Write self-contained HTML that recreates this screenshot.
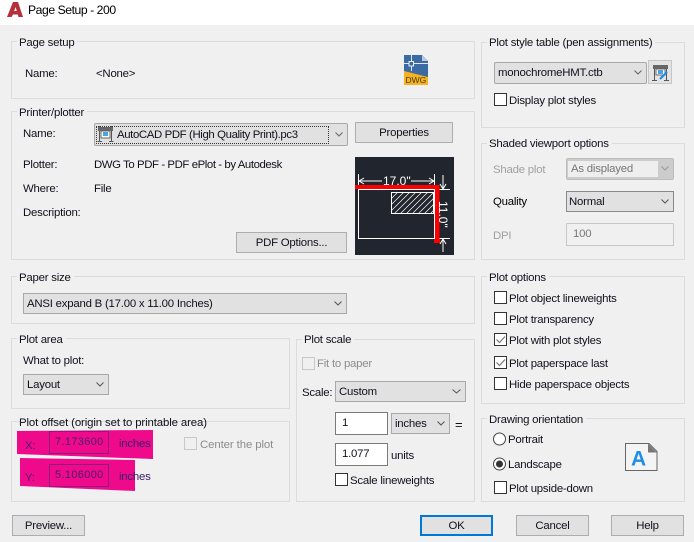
<!DOCTYPE html>
<html><head><meta charset="utf-8"><style>
html,body{margin:0;padding:0}
body{width:694px;height:542px;position:relative;overflow:hidden;background:#f0f0f0;font:11.4px "Liberation Sans",sans-serif;letter-spacing:-.22px;color:#10101c}
#top{position:absolute;left:0;top:0;width:694px;height:25px;background:#fff}
.g{position:absolute;border:1px solid #dcdcdc;box-sizing:border-box}
.l{position:absolute;background:#f0f0f0;padding:0 3px 0 2px;height:14px;line-height:14px;white-space:nowrap;margin-top:1px}
.t{position:absolute;white-space:nowrap;line-height:14px;margin-top:1px}
.d{color:#8c8c8c}
.b{position:absolute;box-sizing:border-box;background:#e1e1e1;border:1px solid #adadad;text-align:center;white-space:nowrap;padding-top:1px}
.s{position:absolute;box-sizing:border-box;background:#e1e1e1;border:1px solid #a8a8a8;white-space:nowrap;padding-left:3px;padding-top:1px}
.s svg{position:absolute;right:4px;top:50%;margin-top:-3px}
.i{position:absolute;box-sizing:border-box;background:#fff;border:1px solid #7a7a7a;padding-left:6px;white-space:nowrap;padding-top:1px}
.c{position:absolute;box-sizing:border-box;width:13px;height:13px;background:#fff;border:1px solid #333}
.c svg{position:absolute;left:0;top:0}
.m{position:absolute;background:#ee0a8b}
svg text{letter-spacing:0}
</style></head><body>
<div id="top"></div>
<svg style="position:absolute;left:7px;top:2px" width="16" height="15" viewBox="0 0 16 15"><path d="M0 15 L6 0 H11 L16 15 H11.500 L10.800 12.500 H6 L4.500 15 Z M7.200 9 H9.800 L8.600 5 Z" fill="#b5303a" fill-rule="evenodd"/></svg>
<div class="t" style="left:28px;top:2px;font-size:12.2px;letter-spacing:-.45px;color:#000">Page Setup - 200</div>

<!-- groups -->
<div class="g" style="left:11px;top:41px;width:464px;height:58px"></div>
<div class="l" style="left:17px;top:35px">Page setup</div>
<div class="t" style="left:25px;top:66px">Name:</div>
<div class="t" style="left:96px;top:66px">&lt;None&gt;</div>
<svg style="position:absolute;left:404px;top:55px" width="24" height="30" viewBox="0 0 24 30"><path d="M0 0H18L24 6V30H0Z" fill="#f6b21f"/><path d="M0 0H18L24 6V22L0 16Z" fill="#3c6aa3"/><path d="M18 0L24 6H18Z" fill="#b9cbe2"/><path d="M0 8.500H24M7.500 0V16" stroke="#dfe8f3" stroke-width="1" fill="none"/><rect x="5" y="6.500" width="4.500" height="4.500" fill="#3c6aa3" stroke="#e6eef7"/><text x="1.500" y="28" font-size="8.500" fill="#4a3c18" font-family="Liberation Sans">DWG</text></svg>

<div class="g" style="left:11px;top:111px;width:464px;height:149px"></div>
<div class="l" style="left:17px;top:105px">Printer/plotter</div>
<div class="t" style="left:23px;top:126px">Name:</div>
<div class="s" style="left:94px;top:123px;width:254px;height:23px;border-radius:2px;padding-left:22px;line-height:21px;letter-spacing:-.38px">AutoCAD PDF (High Quality Print).pc3<svg width="8" height="5"><path d="M0.500 0.500L4 4L7.500 0.500" stroke="#666" fill="none"/></svg></div>
<div style="position:absolute;left:96px;top:126px;width:231px;height:16px;border:1px dotted #333"></div>
<svg style="position:absolute;left:97px;top:125px" width="17" height="18" viewBox="0 0 17 18"><path d="M2.500 1V17M14.500 1V17M0.500 16.500H5M12 16.500H16.500" stroke="#555" fill="none"/><rect x="1" y="2" width="15" height="4" fill="#666"/><rect x="4" y="6" width="9" height="7" fill="#fff" stroke="#666"/><rect x="6" y="7" width="5" height="4" fill="#4aa3df"/></svg>
<div class="b" style="left:355px;top:122px;width:98px;height:21px;line-height:19px">Properties</div>
<div class="t" style="left:23px;top:157px">Plotter:</div>
<div class="t" style="left:94px;top:157px;letter-spacing:-.42px">DWG To PDF - PDF ePlot - by Autodesk</div>
<div class="t" style="left:23px;top:181px">Where:</div>
<div class="t" style="left:94px;top:181px">File</div>
<div class="t" style="left:23px;top:205px">Description:</div>
<div class="b" style="left:236px;top:232px;width:111px;height:21px;line-height:19px">PDF Options...</div>
<svg style="position:absolute;left:355px;top:157px" width="99" height="98" viewBox="0 0 99 98">
<rect width="99" height="98" fill="#21262e"/>
<defs><pattern id="h" width="6" height="6" patternUnits="userSpaceOnUse"><path d="M0 6L6 0M-1 1L1 -1M5 7L7 5" stroke="#fff" stroke-width=".7"/></pattern></defs>
<rect x="3.500" y="32.500" width="76" height="49" fill="none" stroke="#fff"/>
<rect x="36.500" y="35.500" width="42" height="21" fill="url(#h)" stroke="#fff"/>
<path d="M3.500 17V30M79.500 17V30M4 24H27M56 24H79M88 18V32M83 32.500H95M88 82V95M83 81.500H95M4 24L9 21M4 24L9 27M79 24L74 21M79 24L74 27M88 32L85 27M88 32L91 27M88 82L85 87M88 82L91 87" stroke="#fff" fill="none"/>
<rect x="0" y="28" width="84" height="4" fill="#f00"/><rect x="80" y="28" width="4.500" height="55" fill="#f00"/><rect x="79" y="82" width="6" height="4" fill="#f00"/>
<text x="28" y="28" font-size="12" fill="#fff" font-family="Liberation Sans">17.0"</text>
<text transform="translate(84,44) rotate(90)" font-size="12" fill="#fff" font-family="Liberation Sans">11.0"</text>
</svg>

<div class="g" style="left:11px;top:276px;width:464px;height:48px"></div>
<div class="l" style="left:17px;top:270px">Paper size</div>
<div class="s" style="left:23px;top:293px;width:324px;height:21px;line-height:19px">ANSI expand B (17.00 x 11.00 Inches)<svg width="8" height="5"><path d="M0.500 0.500L4 4L7.500 0.500" stroke="#555" fill="none"/></svg></div>

<div class="g" style="left:11px;top:338px;width:279px;height:71px"></div>
<div class="l" style="left:17px;top:332px">Plot area</div>
<div class="t" style="left:23px;top:353px">What to plot:</div>
<div class="s" style="left:23px;top:374px;width:86px;height:21px;line-height:19px">Layout<svg width="8" height="5"><path d="M0.500 0.500L4 4L7.500 0.500" stroke="#555" fill="none"/></svg></div>

<div class="g" style="left:11px;top:421px;width:279px;height:81px"></div>
<div class="m" style="left:17px;top:430px;width:136px;height:29px;clip-path:polygon(0 1px,100% 0,100% 100%,0 24px)"></div>
<div class="m" style="left:20px;top:458px;width:115px;height:33px;clip-path:polygon(0 0,100% 2px,100% 100%,0 28px)"></div>
<div class="l" style="left:17px;top:415px;background:none;padding-left:2px;letter-spacing:-.12px">Plot offset (origin set to printable area)</div>
<div class="t" style="left:25px;top:438px;color:#4a1b6e">X:</div>
<div style="position:absolute;box-sizing:border-box;left:49px;top:431px;width:60px;height:23px;border:1px solid #8e1b7c"></div>
<div class="t" style="left:55px;top:434px;color:#4a1b6e;font-size:10.9px;letter-spacing:.4px">7.173600</div>
<div class="t" style="left:119px;top:436px;color:#3a1a6a">inches</div>
<div class="t" style="left:25px;top:470px;color:#4a1b6e">Y:</div>
<div style="position:absolute;box-sizing:border-box;left:49px;top:464px;width:60px;height:23px;border:1px solid #8e1b7c"></div>
<div class="t" style="left:55px;top:467px;color:#4a1b6e;font-size:10.9px;letter-spacing:.4px">5.106000</div>
<div class="t" style="left:119px;top:469px;color:#3a1a6a">inches</div>
<div class="c" style="left:184px;top:437px;background:#f0f0f0;border-color:#c8c8c8"></div>
<div class="t d" style="left:200px;top:437px;letter-spacing:-.1px">Center the plot</div>

<div class="g" style="left:296px;top:339px;width:179px;height:163px"></div>
<div class="l" style="left:302px;top:332px">Plot scale</div>
<div class="c" style="left:302px;top:357px;background:#f0f0f0;border-color:#c8c8c8"></div>
<div class="t d" style="left:317px;top:356px">Fit to paper</div>
<div class="t" style="left:302px;top:385px">Scale:</div>
<div class="s" style="left:335px;top:381px;width:131px;height:21px;line-height:19px">Custom<svg width="9" height="5"><path d="M0.500 0.500L4.500 4L8.500 0.500" stroke="#555" fill="none"/></svg></div>
<div class="i" style="left:335px;top:412px;width:53px;height:23px;line-height:19px">1</div>
<div class="s" style="left:391px;top:413px;width:59px;height:21px;line-height:19px">inches<svg width="8" height="5"><path d="M0.500 0.500L4 4L7.500 0.500" stroke="#555" fill="none"/></svg></div>
<div class="t" style="left:455px;top:417px;font-size:13px">=</div>
<div class="i" style="left:335px;top:443px;width:53px;height:23px;line-height:19px">1.077</div>
<div class="t" style="left:391px;top:448px">units</div>
<div class="c" style="left:335px;top:473px"></div>
<div class="t" style="left:350px;top:473px">Scale lineweights</div>

<div class="g" style="left:481px;top:42px;width:204px;height:86px"></div>
<div class="l" style="left:487px;top:35px">Plot style table (pen assignments)</div>
<div class="s" style="left:494px;top:62px;width:153px;height:22px;border-radius:2px;line-height:19px">monochromeHMT.ctb<svg width="8" height="5"><path d="M0.500 0.500L4 4L7.500 0.500" stroke="#666" fill="none"/></svg></div>
<div class="b" style="left:648px;top:60px;width:24px;height:24px;background:#e4e4e4;border-color:#c6c6c6"></div>
<svg style="position:absolute;left:651px;top:63px" width="19" height="19" viewBox="0 0 19 19"><path d="M3.500 2V18M15.500 2V18M1 17.500H6M13 17.500H18" stroke="#555" fill="none"/><rect x="2" y="2" width="15" height="4" fill="#666"/><rect x="5" y="6" width="9" height="6" fill="#fff" stroke="#666"/><rect x="7" y="7" width="5" height="4" fill="#4aa3df"/><path d="M9 16L16 9" stroke="#1e88e5" stroke-width="2"/></svg>
<div class="c" style="left:494px;top:93px"></div>
<div class="t" style="left:509px;top:93px">Display plot styles</div>

<div class="g" style="left:481px;top:143px;width:204px;height:117px"></div>
<div class="l" style="left:487px;top:136px">Shaded viewport options</div>
<div class="t" style="left:493px;top:162px;color:#a0a0a0">Shade plot</div>
<div class="s" style="left:566px;top:158px;width:108px;height:22px;background:#ccc;border-color:#bcbcbc;border-radius:2px;color:#777;padding-left:0"><span style="position:absolute;left:1px;top:2px;width:90px;height:16px;background:#eee;line-height:16px;padding-left:3px;box-sizing:border-box">As displayed</span><svg width="8" height="5"><path d="M0.500 0.500L4 4L7.500 0.500" stroke="#999" fill="none"/></svg></div>
<div class="t" style="left:493px;top:194px;color:#000">Quality</div>
<div class="s" style="left:566px;top:191px;width:108px;height:21px;line-height:19px;border-color:#8a8a8a;padding-left:2px">Normal<svg width="8" height="5"><path d="M0.500 0.500L4 4L7.500 0.500" stroke="#555" fill="none"/></svg></div>
<div class="t" style="left:493px;top:228px;color:#a0a0a0">DPI</div>
<div class="i" style="left:566px;top:223px;width:108px;height:23px;line-height:18px;background:#f0f0f0;border-color:#c8c8c8;color:#777;padding-left:6px">100</div>

<div class="g" style="left:481px;top:276px;width:204px;height:128px"></div>
<div class="l" style="left:487px;top:270px">Plot options</div>
<div class="c" style="left:494px;top:291px"></div><div class="t" style="left:509px;top:291px">Plot object lineweights</div>
<div class="c" style="left:494px;top:312px"></div><div class="t" style="left:509px;top:312px">Plot transparency</div>
<div class="c" style="left:494px;top:333px"><svg width="11" height="11"><path d="M1.500 5.500L4.500 8.500L10 2.500" stroke="#777" stroke-width="1.200" fill="none"/></svg></div><div class="t" style="left:509px;top:333px">Plot with plot styles</div>
<div class="c" style="left:494px;top:356px"><svg width="11" height="11"><path d="M1.500 5.500L4.500 8.500L10 2.500" stroke="#777" stroke-width="1.200" fill="none"/></svg></div><div class="t" style="left:509px;top:356px">Plot paperspace last</div>
<div class="c" style="left:494px;top:377px"></div><div class="t" style="left:509px;top:377px">Hide paperspace objects</div>

<div class="g" style="left:481px;top:418px;width:204px;height:84px"></div>
<div class="l" style="left:487px;top:412px">Drawing orientation</div>
<svg style="position:absolute;left:492px;top:431px" width="15" height="42" viewBox="0 0 15 42"><circle cx="7.500" cy="8" r="6" fill="#fff" stroke="#444"/><circle cx="7.500" cy="33" r="6" fill="#fff" stroke="#444"/><circle cx="7.500" cy="33" r="3.500" fill="#333"/></svg>
<div class="t" style="left:508px;top:432px">Portrait</div>
<div class="t" style="left:508px;top:457px">Landscape</div>
<svg style="position:absolute;left:625px;top:443px" width="33" height="28" viewBox="0 0 33 28"><path d="M.5 .5H24L32 8.500V27.500H.5Z" fill="#f4f4f4" stroke="#666"/><path d="M23 .5L32 9.500H23Z" fill="#777"/><text x="6" y="22.500" font-size="21" font-weight="bold" fill="#1e8fe8" font-family="Liberation Sans">A</text></svg>
<div class="c" style="left:494px;top:481px"></div><div class="t" style="left:509px;top:481px">Plot upside-down</div>

<div class="b" style="left:12px;top:515px;width:73px;height:21px;line-height:19px">Preview...</div>
<div class="b" style="left:420px;top:515px;width:73px;height:21px;line-height:17px;border:2px solid #0078d7">OK</div>
<div class="b" style="left:516px;top:515px;width:73px;height:21px;line-height:19px">Cancel</div>
<div class="b" style="left:611px;top:515px;width:73px;height:21px;line-height:19px">Help</div>
</body></html>
